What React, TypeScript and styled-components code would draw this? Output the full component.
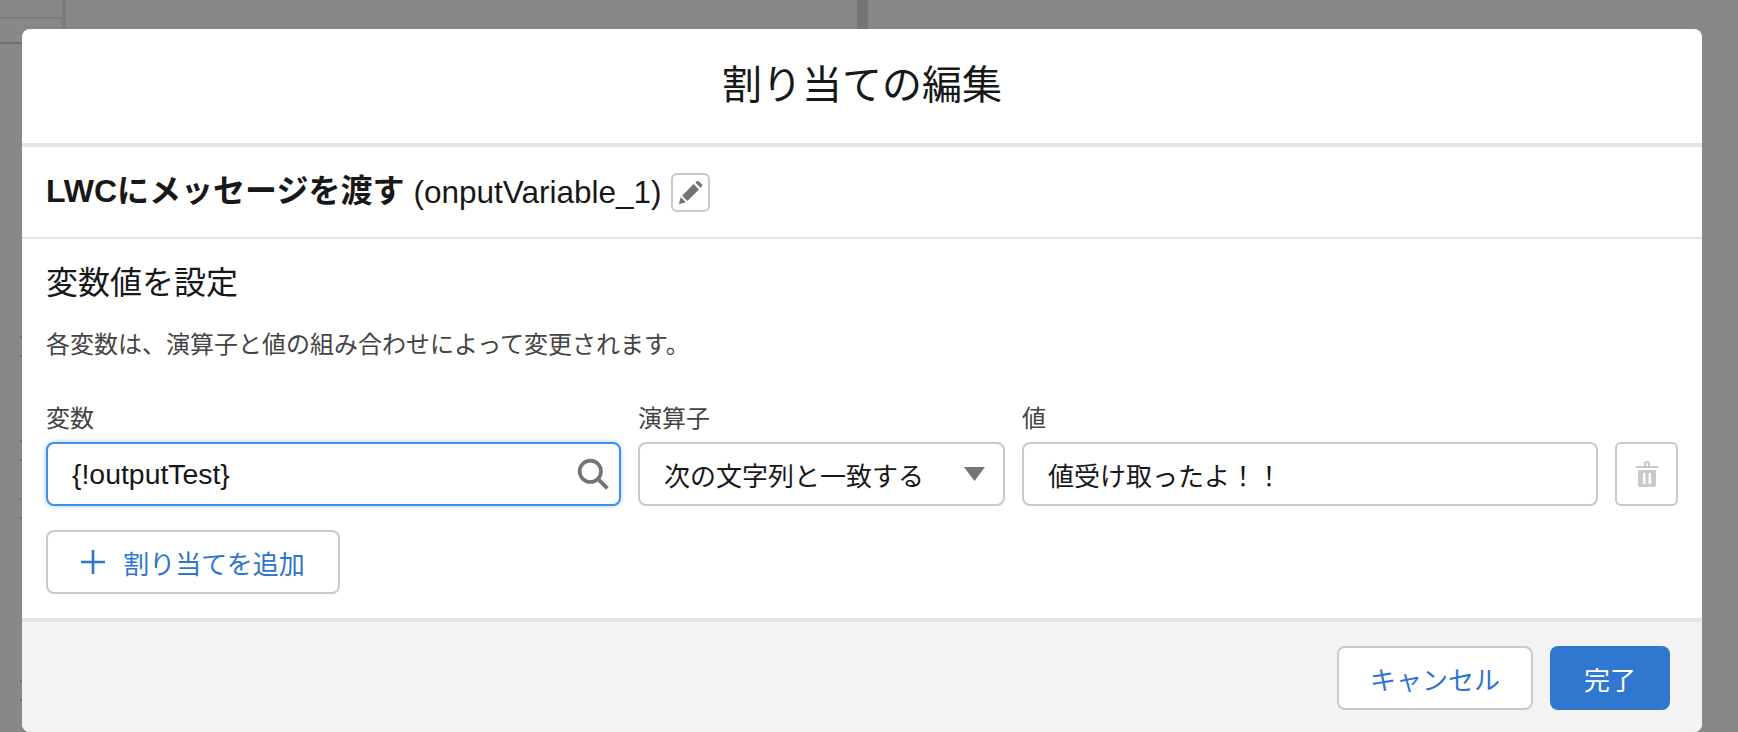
import React from 'react'
import styled, { createGlobalStyle } from 'styled-components'

const GlobalStyle = createGlobalStyle`
  html, body {
    margin: 0;
    padding: 0;
    height: 100%;
    overflow: hidden;
  }
  body {
    font-family: "Liberation Sans", "Noto Sans CJK JP", sans-serif;
    color: #181818;
  }
  * {
    box-sizing: border-box;
  }
`

const Page = styled.div`
  width: 1738px;
  height: 732px;
  padding: 29px 0 0 22px;
  overflow: hidden;
  background-color: #888888;
  background-image:
    linear-gradient(#747474, #747474),
    linear-gradient(#7b7b7b, #7b7b7b),
    linear-gradient(#6f6f6f, #6f6f6f),
    linear-gradient(#7c7c7c, #7c7c7c),
    linear-gradient(#6e6e6e, #6e6e6e),
    linear-gradient(#6e6e6e, #6e6e6e),
    linear-gradient(#6e6e6e, #6e6e6e),
    linear-gradient(#6e6e6e, #6e6e6e),
    linear-gradient(#6e6e6e, #6e6e6e),
    linear-gradient(#6e6e6e, #6e6e6e),
    linear-gradient(#6e6e6e, #6e6e6e),
    linear-gradient(#6e6e6e, #6e6e6e);
  background-repeat: no-repeat;
  background-size:
    11px 29px,
    62px 2px,
    22px 2px,
    4px 29px,
    2px 2px, 2px 2px, 2px 2px, 2px 2px, 2px 2px, 2px 2px, 2px 2px, 2px 2px;
  background-position:
    857px 0,
    0 17px,
    0 42px,
    62px 0,
    20px 336px, 20px 355px, 20px 440px, 20px 459px, 20px 498px, 20px 517px, 20px 680px, 20px 699px;
`

const Modal = styled.div`
  width: 1680px;
  height: 703px;
  background: #fff;
  border-radius: 8px;
  overflow: hidden;
  display: flex;
  flex-direction: column;
`

const Header = styled.header`
  height: 118px;
  flex: none;
  display: flex;
  align-items: center;
  justify-content: center;
  border-bottom: 4px solid #e5e5e5;
  padding-top: 6px;
  padding-bottom: 8px;
`

const Title = styled.h1`
  margin: 0;
  font-size: 40px;
  line-height: 60px;
  font-weight: 400;
  color: #181818;
`

const NameRow = styled.div`
  height: 92px;
  flex: none;
  display: flex;
  align-items: center;
  padding: 0 24px;
  border-bottom: 2px solid #e5e5e5;
`

const VarName = styled.strong`
  font-size: 32px;
  line-height: 44px;
  font-weight: 700;
  color: #181818;
  position: relative;
  top: -1px;
`

const ApiName = styled.span`
  margin-left: 9px;
  font-size: 31.5px;
  line-height: 44px;
  color: #181818;
`

const IconButton = styled.button<{ $w: number; $h: number }>`
  width: ${(p) => p.$w}px;
  height: ${(p) => p.$h}px;
  flex: none;
  padding: 0;
  background: #fff;
  border: 2px solid #c9c9c9;
  border-radius: 6px;
  display: flex;
  align-items: center;
  justify-content: center;
`

const EditButton = styled(IconButton)`
  margin-left: 9px;
`

const Body = styled.section`
  flex: 1;
  padding: 20px 24px 0;
`

const SectionTitle = styled.h2`
  margin: 0;
  font-size: 32px;
  line-height: 48px;
  font-weight: 400;
  color: #181818;
`

const Description = styled.p`
  margin: 21px 0 0;
  font-size: 24px;
  line-height: 34px;
  color: #444;
`

const Fields = styled.div`
  display: grid;
  grid-template-columns: 575px 367px 576px 63px;
  column-gap: 17px;
  margin-top: 40px;
  align-items: end;
`

const Field = styled.div`
  display: flex;
  flex-direction: column;
`

const Label = styled.label`
  font-size: 24px;
  line-height: 34px;
  color: #444;
  margin-bottom: 6px;
`

const InputBox = styled.div<{ $focus?: boolean }>`
  height: 64px;
  display: flex;
  align-items: center;
  justify-content: space-between;
  padding: 0 10px 0 24px;
  font-size: 26px;
  color: #181818;
  background: #fff;
  border: 2px solid ${(p) => (p.$focus ? '#3c8ef0' : '#c9c9c9')};
  border-radius: 8px;
  box-shadow: ${(p) => (p.$focus ? '0 0 5px #a9cdf6' : 'none')};
`

const LatinValue = styled.span`
  font-size: 28.4px;
`

const SelectBox = styled(InputBox)`
  padding-right: 18px;
`

const AddButton = styled.button`
  margin-top: 24px;
  width: 294px;
  height: 64px;
  display: flex;
  align-items: center;
  justify-content: center;
  gap: 18px;
  padding: 0;
  background: #fff;
  border: 2px solid #c9c9c9;
  border-radius: 8px;
  color: #2e75cf;
  font-family: inherit;
  font-size: 26px;
`

const Footer = styled.footer`
  height: 114px;
  flex: none;
  display: flex;
  justify-content: flex-end;
  align-items: flex-start;
  gap: 17px;
  padding: 24px 32px 0 0;
  background: #f3f3f3;
  border-top: 4px solid #e5e5e5;
`

const FooterButton = styled.button<{ $primary?: boolean }>`
  height: 64px;
  width: ${(p) => (p.$primary ? 120 : 196)}px;
  padding: 0;
  font-family: inherit;
  font-size: 26px;
  border-radius: 8px;
  background: ${(p) => (p.$primary ? '#3077cf' : '#fff')};
  color: ${(p) => (p.$primary ? '#fff' : '#2e75cf')};
  border: 2px solid ${(p) => (p.$primary ? '#3077cf' : '#c9c9c9')};
`

function PencilIcon() {
  return (
    <svg width="25" height="25" viewBox="0 0 24 24" fill="#747474">
      <path d="M0.8 23.2 L2.6 16.4 L7.6 21.4 Z" />
      <path d="M3.9 15 L15 3.9 L20.1 9 L9 20.1 Z" />
      <path d="M16.6 2.4 L17.9 1.1 Q18.9 .3 19.9 1.1 L22.9 4.1 Q23.7 5.1 22.9 6.1 L21.6 7.4 Z" />
    </svg>
  )
}

function SearchIcon() {
  return (
    <svg width="32" height="32" viewBox="0 0 30 30" fill="none" stroke="#747474" strokeWidth="3.4">
      <circle cx="12.5" cy="12.5" r="10" />
      <path d="M19.5 19.5 L28.5 28.5" strokeWidth="3.6" />
    </svg>
  )
}

function CaretIcon() {
  return (
    <svg width="21" height="14" viewBox="0 0 21 14" fill="#747474">
      <path d="M0 0 H21 L10.5 14 Z" />
    </svg>
  )
}

function TrashIcon() {
  return (
    <svg width="24" height="28" viewBox="0 0 24 28" fill="#c9c9c9">
      <path d="M1 6 H9 V3.5 Q9 1 12 1 Q15 1 15 3.5 V6 H23 V8 H1 Z M11 3.5 V6 H13 V3.5 Q13 3 12 3 Q11 3 11 3.5 Z" fillRule="evenodd" />
      <path d="M3 10 H21 V25 Q21 27 19 27 H5 Q3 27 3 25 Z M8 13 V24 H10.5 V13 Z M13.5 13 V24 H16 V13 Z" fillRule="evenodd" />
    </svg>
  )
}

function PlusIcon() {
  return (
    <svg width="24" height="24" viewBox="0 0 24 24" stroke="#2e75cf" strokeWidth="2.6" fill="none">
      <path d="M12 0 V24 M0 12 H24" />
    </svg>
  )
}

export default function App() {
  return (
    <>
      <GlobalStyle />
      <Page>
        <Modal>
          <Header>
            <Title>割り当ての編集</Title>
          </Header>
          <NameRow>
            <VarName>LWCにメッセージを渡す</VarName>
            <ApiName>(onputVariable_1)</ApiName>
            <EditButton $w={39} $h={39}>
              <PencilIcon />
            </EditButton>
          </NameRow>
          <Body>
            <SectionTitle>変数値を設定</SectionTitle>
            <Description>各変数は、演算子と値の組み合わせによって変更されます。</Description>
            <Fields>
              <Field>
                <Label>変数</Label>
                <InputBox $focus>
                  <LatinValue>{'{!outputTest}'}</LatinValue>
                  <SearchIcon />
                </InputBox>
              </Field>
              <Field>
                <Label>演算子</Label>
                <SelectBox>
                  次の文字列と一致する
                  <CaretIcon />
                </SelectBox>
              </Field>
              <Field>
                <Label>値</Label>
                <InputBox>値受け取ったよ！！</InputBox>
              </Field>
              <IconButton $w={63} $h={64}>
                <TrashIcon />
              </IconButton>
            </Fields>
            <AddButton>
              <PlusIcon />
              割り当てを追加
            </AddButton>
          </Body>
          <Footer>
            <FooterButton>キャンセル</FooterButton>
            <FooterButton $primary>完了</FooterButton>
          </Footer>
        </Modal>
      </Page>
    </>
  )
}
